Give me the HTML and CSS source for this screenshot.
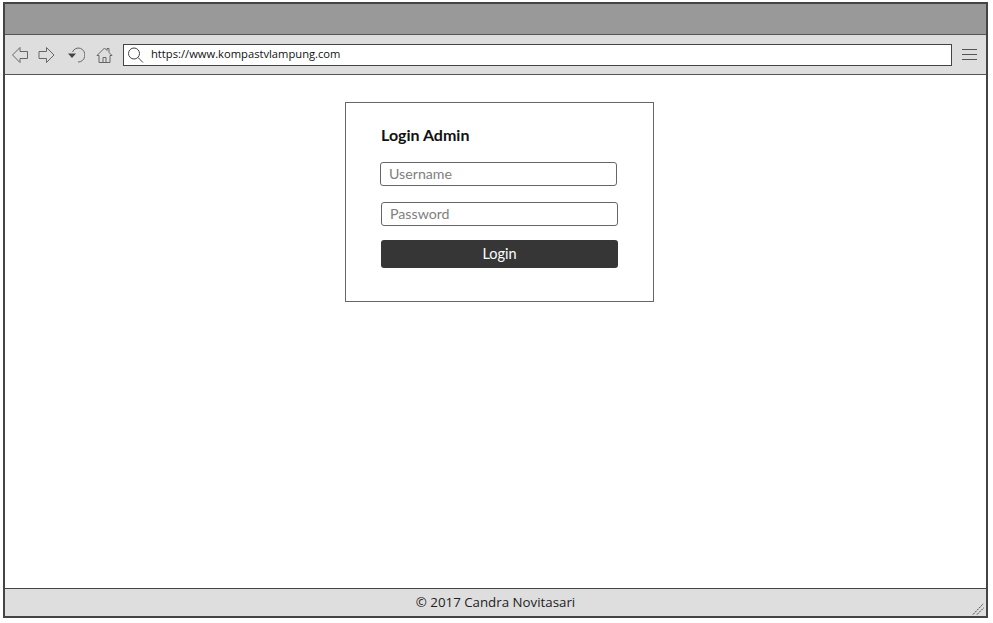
FILE: index.html
```html
<!DOCTYPE html>
<html lang="en">
<head>
    <meta charset="UTF-8">
    <meta name="viewport" content="width=device-width, initial-scale=1.0">
    <title>Login Admin</title>
    <link rel="stylesheet" href="styles.css">
</head>
<body>
    <div class="window">
        <div class="title-bar"></div>

        <div class="toolbar">
            <div class="nav-icons">
                <!-- back -->
                <svg class="icon" width="18" height="18" viewBox="0 0 18 18">
                    <path d="M0.5 9 L8 1.5 V5.5 H15.5 V12.5 H8 V16.5 Z" />
                </svg>
                <!-- forward -->
                <svg class="icon" width="18" height="18" viewBox="0 0 18 18">
                    <path d="M16 9 L8.5 1.5 V5.5 H1 V12.5 H8.5 V16.5 Z" />
                </svg>
                <!-- reload -->
                <svg class="icon icon-reload" width="18" height="18" viewBox="0 0 18 18">
                    <path d="M5.5 6 A6.5 7 0 1 1 11 16" />
                    <path class="icon-solid" d="M1 7.5 H9 L5 12 Z" />
                </svg>
                <!-- home -->
                <svg class="icon icon-home" width="18" height="18" viewBox="0 0 18 18">
                    <path d="M2 9.5 L9.5 2 L12 4.5 V2.5 H14 V6.5 L17 9.5 H15 V16.5 H4 V9.5 Z" />
                    <path d="M8 16.5 V11.5 H11 V16.5" />
                </svg>
            </div>
            <div class="address-bar">
                <svg class="icon" width="16" height="16" viewBox="0 0 16 16">
                    <circle cx="6" cy="6.5" r="5.5" />
                    <path d="M10 10.5 L15 15.5" />
                </svg>
                <span class="url">https://www.kompastvlampung.com</span>
            </div>
            <div class="menu-icon">
                <span></span>
                <span></span>
                <span></span>
            </div>
        </div>

        <div class="content">
            <form class="login-box">
                <h1 class="login-title">Login Admin</h1>
                <div class="field field-first">Username</div>
                <div class="field">Password</div>
                <div class="login-button">Login</div>
            </form>
        </div>

        <div class="status-bar">
            <span class="copyright">&copy; 2017 Candra Novitasari</span>
            <svg class="resize-grip" width="13" height="13" viewBox="0 0 13 13">
                <path d="M2 12.5 L12.5 1.5 M6 12.5 L13 5.5" />
            </svg>
        </div>
    </div>
</body>
</html>
```

FILE: styles.css
```css
body {
    margin: 0;
    padding: 2px 5px 5px 3px;
    height: 623px;
    box-sizing: border-box;
    background-color: white;
    font-family: 'Lato', sans-serif;
    overflow: hidden;
}

.window {
    height: 616px;
    box-sizing: border-box;
    border: 2px solid #444;
    display: flex;
    flex-direction: column;
}

.title-bar {
    height: 30px;
    background-color: #999;
    border-bottom: 1px solid #555;
}

.toolbar {
    height: 39px;
    background-color: #dedede;
    border-bottom: 1px solid #555;
    display: flex;
    align-items: center;
    padding-left: 7px;
}

.nav-icons {
    display: flex;
    gap: 8px;
}

.icon {
    fill: none;
    stroke: #666;
    stroke-width: 1;
    flex: none;
}

.icon-solid {
    fill: #444;
    stroke: none;
}

.icon-reload {
    margin-left: 3px;
}

.icon-home {
    margin-left: 2px;
}

.address-bar {
    width: 829px;
    height: 22px;
    box-sizing: border-box;
    margin-left: 10px;
    background-color: white;
    border: 1px solid #444;
    display: flex;
    align-items: center;
    padding-left: 4px;
    gap: 7px;
}

.address-bar .icon {
    stroke: #444;
}

.url {
    padding-bottom: 2px;
    font-family: 'Open Sans', sans-serif;
    font-size: 11.2px;
    color: #111;
}

.menu-icon {
    margin-left: 10px;
    width: 15px;
    display: flex;
    flex-direction: column;
    gap: 4px;
}

.menu-icon span {
    height: 1px;
    background-color: #555;
}

.content {
    flex: 1;
    background-color: white;
    padding: 27px 0 0 340px;
}

.login-box {
    width: 309px;
    height: 200px;
    box-sizing: border-box;
    border: 1px solid #666;
    padding: 22px 35px 0;
}

.login-title {
    margin: 0 0 17px;
    font-size: 16px;
    line-height: 20px;
    font-weight: 700;
    color: #111;
}

.field {
    width: 237px;
    height: 24px;
    box-sizing: border-box;
    margin-bottom: 16px;
    padding-left: 8px;
    border: 1px solid #666;
    border-radius: 3px;
    background-color: white;
    font-size: 14.2px;
    line-height: 21px;
    color: #808080;
}

.field-first {
    margin-left: -1px;
}

.login-button {
    width: 237px;
    height: 28px;
    margin-top: -2px;
    border-radius: 3px;
    background-color: #363636;
    color: white;
    font-size: 14.5px;
    line-height: 27px;
    text-align: center;
}

.status-bar {
    height: 28px;
    box-sizing: border-box;
    background-color: #dedede;
    border-top: 1px solid #444;
    position: relative;
    text-align: center;
}

.copyright {
    font-family: 'Open Sans', sans-serif;
    font-size: 13.3px;
    line-height: 27px;
    color: #222;
}

.resize-grip {
    position: absolute;
    right: 2px;
    bottom: 1px;
    stroke: #444;
    stroke-width: 1;
    stroke-dasharray: 2 1;
}
```
